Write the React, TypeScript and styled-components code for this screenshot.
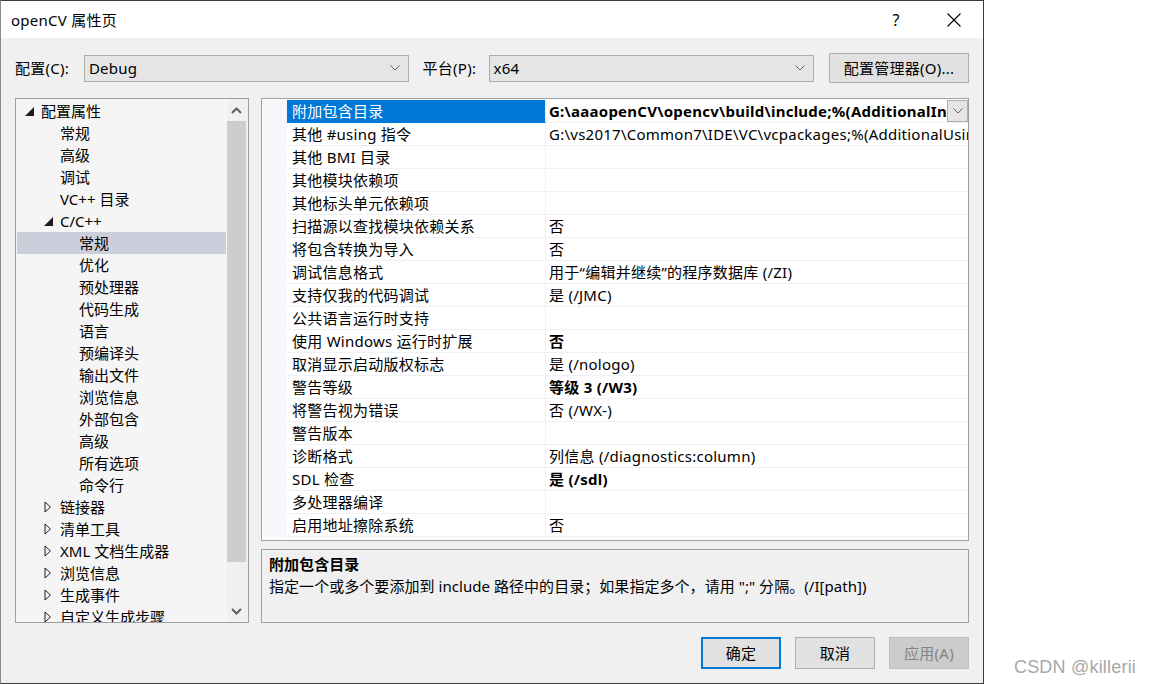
import React from "react";
import styled, { createGlobalStyle, css } from "styled-components";

const FONT = `"Noto Sans", "Noto Sans CJK SC", sans-serif`;

const GlobalStyle = createGlobalStyle`
  html, body { margin: 0; padding: 0; background: #ffffff; }
  body { font-family: ${FONT}; font-size: 15px; color: #000; letter-spacing: 0.25px; }
  * { box-sizing: border-box; }
`;

const Page = styled.div`
  display: flex;
  width: 1152px;
  height: 684px;
  overflow: hidden;
`;

const Dialog = styled.div`
  width: 984px;
  height: 684px;
  display: flex;
  flex-direction: column;
  border: 1px solid #3c3c3c;
  border-left-color: #8a8a8a;
  background: #f0f0f0;
`;

const TitleBar = styled.div`
  height: 37px;
  background: #ffffff;
  display: flex;
  align-items: center;
  justify-content: space-between;
  padding-left: 10px;
`;

const Title = styled.div`
  font-size: 15px;
  line-height: 20px;
`;

const TitleButtons = styled.div`
  display: flex;
  height: 100%;
`;

const TitleButton = styled.div`
  width: 58px;
  height: 100%;
  display: flex;
  align-items: center;
  justify-content: center;
  font-size: 16px;
  color: #000;
`;

const Body = styled.div`
  flex: 1;
  display: flex;
  flex-direction: column;
  padding: 15px 14px 14px 14px;
`;

const ConfigRow = styled.div`
  height: 30px;
  display: flex;
  align-items: center;
`;

const FieldLabel = styled.div<{ $w: number; $gap?: number }>`
  width: ${(p) => p.$w}px;
  padding-left: ${(p) => p.$gap ?? 0}px;
  line-height: 20px;
  white-space: nowrap;
`;

const Combo = styled.div<{ $w: number }>`
  width: ${(p) => p.$w}px;
  height: 27px;
  background: #e5e5e5;
  border: 1px solid #adadad;
  display: flex;
  align-items: center;
  justify-content: space-between;
  padding: 0 8px 0 4px;
  line-height: 20px;
`;

const ActionButton = styled.div`
  margin-left: 15px;
  width: 140px;
  height: 30px;
  background: #e1e1e1;
  border: 1px solid #adadad;
  display: flex;
  align-items: center;
  justify-content: center;
  line-height: 20px;
`;

const Main = styled.div`
  margin-top: 15px;
  height: 525px;
  display: flex;
  gap: 12px;
`;

const TreePanel = styled.div`
  width: 234px;
  height: 100%;
  border: 1px solid #a0a0a0;
  background: #f5f5f5;
  display: flex;
`;

const TreeList = styled.div`
  flex: 1;
  padding: 1px 1px 0 1px;
  overflow: hidden;
  letter-spacing: 0;
`;

const TreeRow = styled.div<{ $level: number; $selected?: boolean }>`
  height: 22px;
  display: flex;
  align-items: center;
  padding-left: ${(p) => 8 + p.$level * 19}px;
  line-height: 20px;
  white-space: nowrap;
  ${(p) =>
    p.$selected &&
    css`
      background: #cccedb;
    `}
`;

const Toggle = styled.span`
  width: 16px;
  height: 22px;
  flex: none;
  display: flex;
  align-items: center;
  justify-content: flex-start;
`;

const Scrollbar = styled.div`
  width: 21px;
  background: #f0f0f0;
  display: flex;
  flex-direction: column;
  padding-right: 2px;
`;

const ScrollArrow = styled.div`
  height: 22px;
  display: flex;
  align-items: center;
  justify-content: center;
`;

const ScrollTrack = styled.div`
  flex: 1;
  display: flex;
  flex-direction: column;
`;

const ScrollThumb = styled.div`
  height: 441px;
  background: #cdcdcd;
`;

const RightColumn = styled.div`
  width: 708px;
  display: flex;
  flex-direction: column;
  gap: 8px;
`;

const Grid = styled.div`
  height: 443px;
  border: 1px solid #a0a0a0;
  background: #ffffff;
  padding-top: 1px;
  overflow: hidden;
`;

const GridRow = styled.div`
  display: flex;
  height: 23px;
`;

const Margin = styled.div`
  width: 25px;
  background: #f5f7fa;
  flex: none;
`;

const NameCell = styled.div<{ $selected?: boolean }>`
  width: 259px;
  flex: none;
  border-bottom: 1px solid #eef0f3;
  border-right: 1px solid #eef0f3;
  padding-left: 5px;
  line-height: 22px;
  white-space: nowrap;
  overflow: hidden;
  ${(p) =>
    p.$selected &&
    css`
      background: #0078d7;
      color: #ffffff;
      border-bottom-color: #0078d7;
    `}
`;

const ValueCell = styled.div<{ $bold?: boolean }>`
  flex: 1;
  min-width: 0;
  display: flex;
  border-bottom: 1px solid #eef0f3;
  padding-left: 3px;
  line-height: 22px;
  font-weight: ${(p) => (p.$bold ? 700 : 400)};
`;

const ValueText = styled.span`
  flex: 1;
  min-width: 0;
  white-space: nowrap;
  overflow: hidden;
`;

const DropButton = styled.div`
  width: 21px;
  height: 22px;
  flex: none;
  background: #e5e5e5;
  border: 1px solid #adadad;
  display: flex;
  align-items: center;
  justify-content: center;
`;

const Description = styled.div`
  height: 74px;
  border: 1px solid #a0a0a0;
  background: #f0f0f0;
  padding: 3px 7px;
  letter-spacing: 0.05px;
`;

const DescTitle = styled.div`
  font-weight: 700;
  line-height: 22px;
`;

const DescText = styled.div`
  line-height: 23px;
`;

const Footer = styled.div`
  margin-top: 14px;
  height: 32px;
  display: flex;
  justify-content: flex-end;
  gap: 14px;
`;

const DialogButton = styled.div<{ $primary?: boolean; $disabled?: boolean }>`
  width: 80px;
  height: 32px;
  background: #e1e1e1;
  border: 1px solid #adadad;
  display: flex;
  align-items: center;
  justify-content: center;
  line-height: 20px;
  ${(p) =>
    p.$primary &&
    css`
      border: 2px solid #0078d7;
    `}
  ${(p) =>
    p.$disabled &&
    css`
      background: #cccccc;
      border-color: #bfbfbf;
      color: #838383;
    `}
`;

const Aside = styled.div`
  flex: 1;
  display: flex;
  align-items: flex-end;
  justify-content: center;
  padding: 0 0 7px 14px;
`;

const Watermark = styled.div`
  font-family: "Liberation Sans", Arial, sans-serif;
  font-size: 18px;
  letter-spacing: 0.2px;
  color: #a8a8a8;
  line-height: 20px;
`;

const Chevron = ({ dir = "down", color = "#606060" }: { dir?: "down" | "up"; color?: string }) => (
  <svg width="10" height="6" viewBox="0 0 10 6">
    <path
      d={dir === "down" ? "M0.5 0.5 L5 5 L9.5 0.5" : "M0.5 5.5 L5 1 L9.5 5.5"}
      fill="none"
      stroke={color}
      strokeWidth="1"
    />
  </svg>
);

const ScrollChevron = ({ dir }: { dir: "up" | "down" }) => (
  <svg width="11" height="7" viewBox="0 0 11 7">
    <path
      d={dir === "down" ? "M1 1 L5.5 5.5 L10 1" : "M1 6 L5.5 1.5 L10 6"}
      fill="none"
      stroke="#606060"
      strokeWidth="2"
    />
  </svg>
);

const Expanded = () => (
  <svg width="9" height="9" viewBox="0 0 9 9">
    <path d="M0 9 L9 9 L9 0 Z" fill="#1e1e1e" />
  </svg>
);

const Collapsed = () => (
  <svg width="8" height="12" viewBox="0 0 8 12">
    <path d="M1 1 L6.5 6 L1 11 Z" fill="none" stroke="#1e1e1e" strokeWidth="1" />
  </svg>
);

type Node = { label: string; level: number; toggle?: "open" | "closed"; selected?: boolean };

const tree: Node[] = [
  { label: "配置属性", level: 0, toggle: "open" },
  { label: "常规", level: 1 },
  { label: "高级", level: 1 },
  { label: "调试", level: 1 },
  { label: "VC++ 目录", level: 1 },
  { label: "C/C++", level: 1, toggle: "open" },
  { label: "常规", level: 2, selected: true },
  { label: "优化", level: 2 },
  { label: "预处理器", level: 2 },
  { label: "代码生成", level: 2 },
  { label: "语言", level: 2 },
  { label: "预编译头", level: 2 },
  { label: "输出文件", level: 2 },
  { label: "浏览信息", level: 2 },
  { label: "外部包含", level: 2 },
  { label: "高级", level: 2 },
  { label: "所有选项", level: 2 },
  { label: "命令行", level: 2 },
  { label: "链接器", level: 1, toggle: "closed" },
  { label: "清单工具", level: 1, toggle: "closed" },
  { label: "XML 文档生成器", level: 1, toggle: "closed" },
  { label: "浏览信息", level: 1, toggle: "closed" },
  { label: "生成事件", level: 1, toggle: "closed" },
  { label: "自定义生成步骤", level: 1, toggle: "closed" },
];

type Prop = { name: string; value: string; bold?: boolean };

const props: Prop[] = [
  { name: "附加包含目录", value: "G:\\aaaopenCV\\opencv\\build\\include;%(AdditionalIncludeDirectories)", bold: true },
  { name: "其他 #using 指令", value: "G:\\vs2017\\Common7\\IDE\\VC\\vcpackages;%(AdditionalUsingDirectories)" },
  { name: "其他 BMI 目录", value: "" },
  { name: "其他模块依赖项", value: "" },
  { name: "其他标头单元依赖项", value: "" },
  { name: "扫描源以查找模块依赖关系", value: "否" },
  { name: "将包含转换为导入", value: "否" },
  { name: "调试信息格式", value: "用于“编辑并继续”的程序数据库 (/ZI)" },
  { name: "支持仅我的代码调试", value: "是 (/JMC)" },
  { name: "公共语言运行时支持", value: "" },
  { name: "使用 Windows 运行时扩展", value: "否", bold: true },
  { name: "取消显示启动版权标志", value: "是 (/nologo)" },
  { name: "警告等级", value: "等级 3 (/W3)", bold: true },
  { name: "将警告视为错误", value: "否 (/WX-)" },
  { name: "警告版本", value: "" },
  { name: "诊断格式", value: "列信息 (/diagnostics:column)" },
  { name: "SDL 检查", value: "是 (/sdl)", bold: true },
  { name: "多处理器编译", value: "" },
  { name: "启用地址擦除系统", value: "否" },
];

export default function App() {
  return (
    <>
      <GlobalStyle />
      <Page>
        <Dialog>
          <TitleBar>
            <Title>openCV 属性页</Title>
            <TitleButtons>
              <TitleButton>?</TitleButton>
              <TitleButton>
                <svg width="14" height="14" viewBox="0 0 14 14">
                  <path d="M0.5 0.5 L13.5 13.5 M13.5 0.5 L0.5 13.5" stroke="#000" strokeWidth="1.1" />
                </svg>
              </TitleButton>
            </TitleButtons>
          </TitleBar>
          <Body>
            <ConfigRow>
              <FieldLabel $w={69}>配置(C):</FieldLabel>
              <Combo $w={325}>
                <span>Debug</span>
                <Chevron />
              </Combo>
              <FieldLabel $w={80} $gap={14}>平台(P):</FieldLabel>
              <Combo $w={326}>
                <span>x64</span>
                <Chevron />
              </Combo>
              <ActionButton>配置管理器(O)...</ActionButton>
            </ConfigRow>
            <Main>
              <TreePanel>
                <TreeList>
                  {tree.map((n, i) => (
                    <TreeRow key={i} $level={n.level} $selected={n.selected}>
                      <Toggle>
                        {n.toggle === "open" && <Expanded />}
                        {n.toggle === "closed" && <Collapsed />}
                      </Toggle>
                      {n.label}
                    </TreeRow>
                  ))}
                </TreeList>
                <Scrollbar>
                  <ScrollArrow>
                    <ScrollChevron dir="up" />
                  </ScrollArrow>
                  <ScrollTrack>
                    <ScrollThumb />
                  </ScrollTrack>
                  <ScrollArrow>
                    <ScrollChevron dir="down" />
                  </ScrollArrow>
                </Scrollbar>
              </TreePanel>
              <RightColumn>
                <Grid>
                  {props.map((p, i) => (
                    <GridRow key={i}>
                      <Margin />
                      <NameCell $selected={i === 0}>{p.name}</NameCell>
                      <ValueCell $bold={p.bold}>
                        <ValueText>{p.value}</ValueText>
                        {i === 0 && (
                          <DropButton>
                            <Chevron />
                          </DropButton>
                        )}
                      </ValueCell>
                    </GridRow>
                  ))}
                </Grid>
                <Description>
                  <DescTitle>附加包含目录</DescTitle>
                  <DescText>
                    指定一个或多个要添加到 include 路径中的目录；如果指定多个，请用 ";" 分隔。(/I[path])
                  </DescText>
                </Description>
              </RightColumn>
            </Main>
            <Footer>
              <DialogButton $primary>确定</DialogButton>
              <DialogButton>取消</DialogButton>
              <DialogButton $disabled>应用(A)</DialogButton>
            </Footer>
          </Body>
        </Dialog>
        <Aside>
          <Watermark>CSDN @killerii</Watermark>
        </Aside>
      </Page>
    </>
  );
}
